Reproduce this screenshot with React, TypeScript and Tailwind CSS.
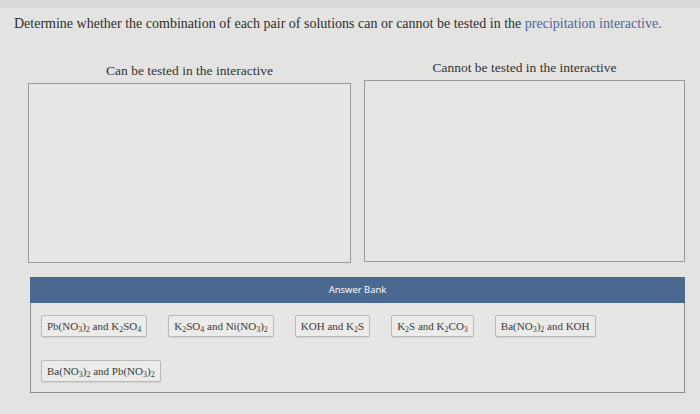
import React from "react";

type Part = string | { s: string };

const chips: Part[][] = [
  ["Pb(NO", { s: "3" }, ")", { s: "2" }, " and K", { s: "2" }, "SO", { s: "4" }],
  ["K", { s: "2" }, "SO", { s: "4" }, " and Ni(NO", { s: "3" }, ")", { s: "2" }],
  ["KOH and K", { s: "2" }, "S"],
  ["K", { s: "2" }, "S and K", { s: "2" }, "CO", { s: "3" }],
  ["Ba(NO", { s: "3" }, ")", { s: "2" }, " and KOH"],
  ["Ba(NO", { s: "3" }, ")", { s: "2" }, " and Pb(NO", { s: "3" }, ")", { s: "2" }],
];

function Formula({ parts }: { parts: Part[] }) {
  return (
    <span className="whitespace-pre">
      {parts.map((p, i) =>
        typeof p === "string" ? (
          <span key={i}>{p}</span>
        ) : (
          <sub key={i} className="text-[8px] bottom-[-0.3em]">
            {p.s}
          </sub>
        )
      )}
    </span>
  );
}

function Chip({ parts }: { parts: Part[] }) {
  return (
    <div className="h-[22px] flex items-center px-[5px] border border-[#b9b9b7] rounded-[2px] bg-[#ebebe9] text-[11px] text-[#3a3a3a] shadow-[0_1px_1px_rgba(0,0,0,0.08)]">
      <Formula parts={parts} />
    </div>
  );
}

export default function App() {
  return (
    <div
      className="w-[700px] h-[414px] bg-[#e3e4e1] overflow-hidden text-[#333]"
      style={{ fontFamily: '"Liberation Serif", "Times New Roman", serif' }}
    >
      <div className="h-[8px] bg-[#dadbd8]" />
      <p className="pl-[14px] pt-[7px] text-[14px] leading-[18px] text-[#2e2e2e]">
        Determine whether the combination of each pair of solutions can or cannot be tested in the{" "}
        <span className="text-[#4f63a3]">precipitation interactive.</span>
      </p>

      <div className="flex gap-[13px] pl-[28px] pt-[27px]">
        <div className="w-[323px] flex flex-col">
          <div className="text-center text-[13.5px] leading-[16px] pt-[3px]">Can be tested in the interactive</div>
          <div className="mt-[4px] h-[180px] border border-[#9a9b98] bg-[#e7e8e6]" />
        </div>
        <div className="w-[321px] flex flex-col">
          <div className="text-center text-[13.5px] leading-[16px]">Cannot be tested in the interactive</div>
          <div className="mt-[4px] h-[182px] border border-[#9a9b98] bg-[#e5e6e4]" />
        </div>
      </div>

      <div className="ml-[30px] mt-[14px] w-[655px]">
        <div
          className="h-[26px] bg-[#4b6990] flex items-center justify-center text-white text-[9.5px]"
          style={{ fontFamily: '"Open Sans", "Liberation Sans", sans-serif' }}
        >
          Answer Bank
        </div>
        <div className="h-[90px] border border-t-0 border-[#8d8e8b] bg-[#e6e7e4] px-[10px] pt-[12px] flex flex-wrap content-start gap-x-[21px] gap-y-[23px]">
          {chips.map((c, i) => (
            <Chip key={i} parts={c} />
          ))}
        </div>
      </div>
    </div>
  );
}
